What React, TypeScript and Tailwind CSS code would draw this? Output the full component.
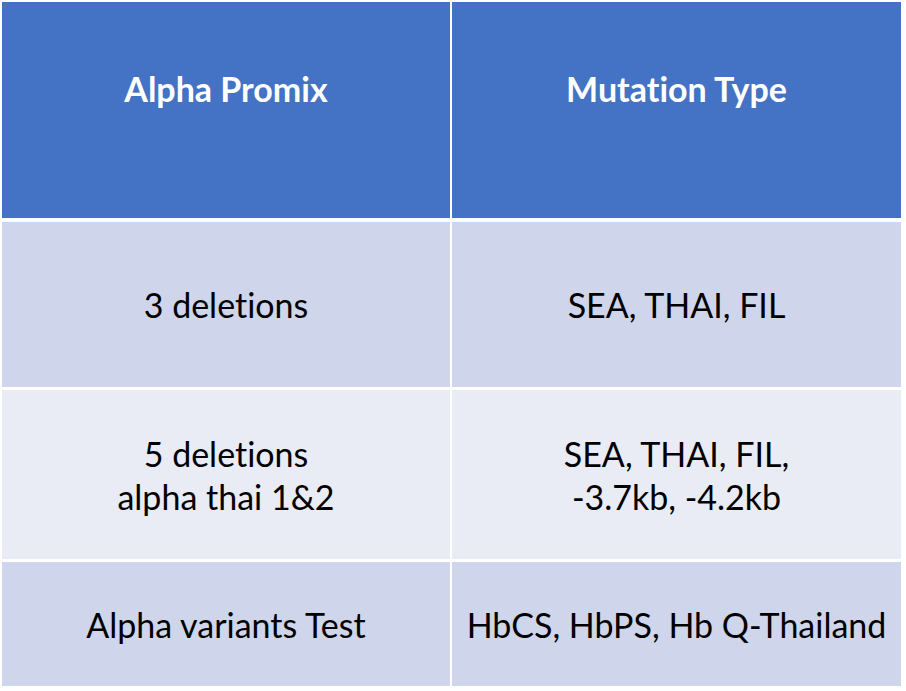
export default function App() {
  const rows = [
    { left: ["3 deletions"], right: ["SEA, THAI, FIL"], h: "h-[165px]", bg: "bg-[#cfd5ea]" },
    { left: ["5 deletions", "alpha thai 1&2"], right: ["SEA, THAI, FIL,", "-3.7kb, -4.2kb"], h: "h-[169px]", bg: "bg-[#e9ebf5]" },
    { left: ["Alpha variants Test"], right: ["HbCS, HbPS, Hb Q-Thailand"], h: "h-[124px]", bg: "bg-[#cfd5ea]" },
  ];

  return (
    <div className="w-[906px] h-[691px] bg-white pt-[2px] pl-[2px] font-['Lato','Open_Sans',sans-serif] [font-variant-ligatures:none]">
      <div className="w-[899px] flex flex-col">
        <div className="h-[216px] grid grid-cols-[448px_449px] gap-x-[2px] mb-[4px]">
          <div className="bg-[#4472c4] flex justify-center pt-[67px] text-white font-bold text-[34px] leading-[40px]">
            Alpha Promix
          </div>
          <div className="bg-[#4472c4] flex justify-center pt-[67px] text-white font-bold text-[34px] leading-[40px]">
            Mutation Type
          </div>
        </div>
        {rows.map((r, i) => (
          <div key={i} className={`${r.h} grid grid-cols-[448px_449px] gap-x-[2px] mb-[3px]`}>
            <div className={`${r.bg} flex flex-col items-center justify-center text-black text-[34px] leading-[43px]`}>
              {r.left.map((t) => (
                <span key={t}>{t}</span>
              ))}
            </div>
            <div className={`${r.bg} flex flex-col items-center justify-center text-black text-[34px] leading-[43px]`}>
              {r.right.map((t) => (
                <span key={t}>{t}</span>
              ))}
            </div>
          </div>
        ))}
      </div>
    </div>
  );
}
